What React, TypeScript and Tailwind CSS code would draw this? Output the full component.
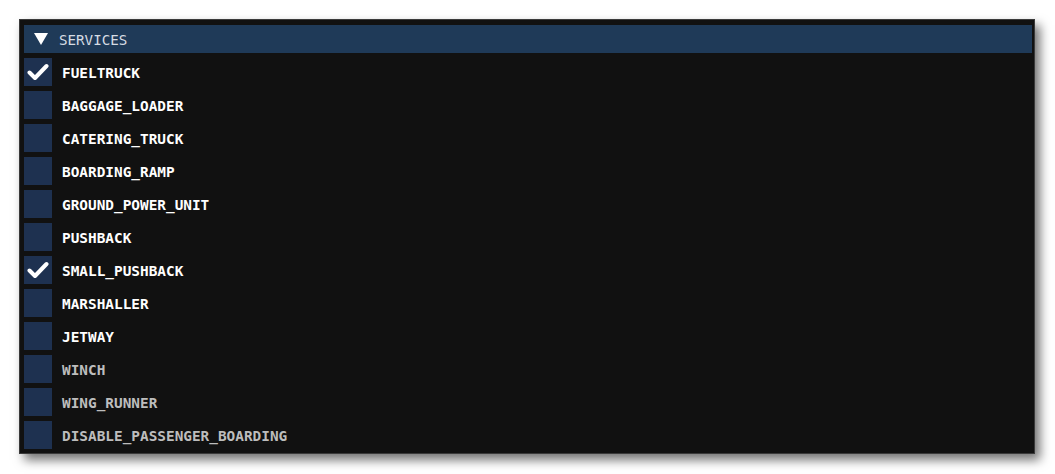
import React from "react";

const items: { name: string; checked: boolean; disabled: boolean }[] = [
  { name: "FUELTRUCK", checked: true, disabled: false },
  { name: "BAGGAGE_LOADER", checked: false, disabled: false },
  { name: "CATERING_TRUCK", checked: false, disabled: false },
  { name: "BOARDING_RAMP", checked: false, disabled: false },
  { name: "GROUND_POWER_UNIT", checked: false, disabled: false },
  { name: "PUSHBACK", checked: false, disabled: false },
  { name: "SMALL_PUSHBACK", checked: true, disabled: false },
  { name: "MARSHALLER", checked: false, disabled: false },
  { name: "JETWAY", checked: false, disabled: false },
  { name: "WINCH", checked: false, disabled: true },
  { name: "WING_RUNNER", checked: false, disabled: true },
  { name: "DISABLE_PASSENGER_BOARDING", checked: false, disabled: true },
];

export default function App() {
  return (
    <div className="w-[1055px] h-[474px] bg-white pl-[19px] pt-[19px]" style={{ fontFamily: '"DejaVu Sans Mono", "Liberation Mono", monospace' }}>
      <div className="w-[1016px] h-[435px] bg-[#111111] border border-[#3a3a3a] pl-[4px] pr-[2px] pt-[5px] shadow-[5px_6px_10px_rgba(0,0,0,0.55)]">
        <div className="h-[28px] bg-[#1f3a58] flex items-center">
          <svg width="14" height="12" viewBox="0 0 14 12" className="ml-[10px]">
            <polygon points="0,0 14,0 7,12" fill="#ffffff" />
          </svg>
          <span className="ml-[11px] mt-[3px] text-[14.2px] text-[#d6dce4]">SERVICES</span>
        </div>
        <div className="mt-[5px] flex flex-col gap-[5px]">
          {items.map((it) => (
            <div key={it.name} className="h-[28px] flex items-center">
              <div className="w-[28px] h-[28px] bg-[#1e3150] flex items-center justify-center">
                {it.checked && (
                  <svg width="22" height="18" viewBox="0 0 22 18">
                    <polyline points="2.5,9.5 8,15 19.5,3" fill="none" stroke="#ffffff" strokeWidth="4" strokeLinecap="round" strokeLinejoin="round" />
                  </svg>
                )}
              </div>
              <span className={`ml-[10px] mt-[4px] text-[14.4px] font-bold ${it.disabled ? "text-[#bdbdbd]" : "text-white"}`}>{it.name}</span>
            </div>
          ))}
        </div>
      </div>
    </div>
  );
}
